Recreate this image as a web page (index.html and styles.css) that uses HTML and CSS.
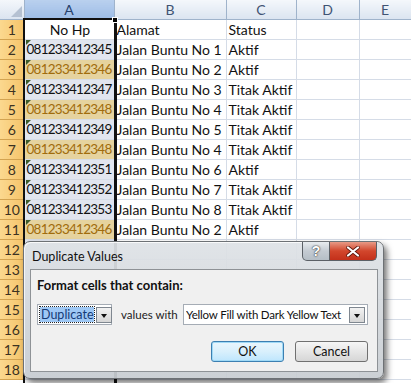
FILE: index.html
```html
<!DOCTYPE html>
<html lang="en">
<head>
    <meta charset="UTF-8">
    <title>Duplicate Values</title>
    <link rel="stylesheet" href="styles.css">
</head>
<body>
    <div class="sheet">
        <table class="grid">
            <colgroup>
                <col class="w-head">
                <col class="w-a">
                <col class="w-b">
                <col class="w-c">
                <col class="w-d">
                <col class="w-e">
            </colgroup>
            <thead>
                <tr>
                    <th class="corner"><span class="corner-tri"></span></th>
                    <th class="col-head selected">A</th>
                    <th class="col-head">B</th>
                    <th class="col-head">C</th>
                    <th class="col-head">D</th>
                    <th class="col-head">E</th>
                </tr>
            </thead>
            <tbody>
                <tr><th class="row-head">1</th><td class="a active center">No Hp</td><td>Alamat</td><td>Status</td><td></td><td></td></tr>
                <tr><th class="row-head">2</th><td class="a flag">081233412345</td><td>Jalan Buntu No 1</td><td>Aktif</td><td></td><td></td></tr>
                <tr><th class="row-head">3</th><td class="a flag dup">081233412346</td><td>Jalan Buntu No 2</td><td>Aktif</td><td></td><td></td></tr>
                <tr><th class="row-head">4</th><td class="a flag">081233412347</td><td>Jalan Buntu No 3</td><td>Titak Aktif</td><td></td><td></td></tr>
                <tr><th class="row-head">5</th><td class="a flag dup">081233412348</td><td>Jalan Buntu No 4</td><td>Titak Aktif</td><td></td><td></td></tr>
                <tr><th class="row-head">6</th><td class="a flag">081233412349</td><td>Jalan Buntu No 5</td><td>Titak Aktif</td><td></td><td></td></tr>
                <tr><th class="row-head">7</th><td class="a flag dup">081233412348</td><td>Jalan Buntu No 4</td><td>Titak Aktif</td><td></td><td></td></tr>
                <tr><th class="row-head">8</th><td class="a flag">081233412351</td><td>Jalan Buntu No 6</td><td>Aktif</td><td></td><td></td></tr>
                <tr><th class="row-head">9</th><td class="a flag">081233412352</td><td>Jalan Buntu No 7</td><td>Titak Aktif</td><td></td><td></td></tr>
                <tr><th class="row-head">10</th><td class="a flag">081233412353</td><td>Jalan Buntu No 8</td><td>Titak Aktif</td><td></td><td></td></tr>
                <tr><th class="row-head">11</th><td class="a flag dup">081233412346</td><td>Jalan Buntu No 2</td><td>Aktif</td><td></td><td></td></tr>
                <tr><th class="row-head">12</th><td class="a"></td><td></td><td></td><td></td><td></td></tr>
                <tr><th class="row-head">13</th><td class="a"></td><td></td><td></td><td></td><td></td></tr>
                <tr><th class="row-head">14</th><td class="a"></td><td></td><td></td><td></td><td></td></tr>
                <tr><th class="row-head">15</th><td class="a"></td><td></td><td></td><td></td><td></td></tr>
                <tr><th class="row-head">16</th><td class="a"></td><td></td><td></td><td></td><td></td></tr>
                <tr><th class="row-head">17</th><td class="a"></td><td></td><td></td><td></td><td></td></tr>
                <tr><th class="row-head">18</th><td class="a"></td><td></td><td></td><td></td><td></td></tr>
            </tbody>
        </table>

        <div class="selection"></div>
        <div class="fill-handle"></div>

        <div class="dialog">
            <div class="dialog-title">
                <span>Duplicate Values</span>
                <div class="title-buttons">
                    <button class="btn-help">?</button>
                    <button class="btn-close">
                        <svg width="14" height="11" viewBox="0 0 14 11">
                            <path d="M2 1.5 L12 9.5 M12 1.5 L2 9.5" stroke="#5a1208" stroke-width="3.6" stroke-linecap="round"/>
                            <path d="M2 1.5 L12 9.5 M12 1.5 L2 9.5" stroke="#fff" stroke-width="2.2" stroke-linecap="round"/>
                        </svg>
                    </button>
                </div>
            </div>
            <div class="dialog-body">
                <p class="dialog-label">Format cells that contain:</p>
                <div class="dialog-row">
                    <div class="combo combo-small">
                        <span class="combo-text focused">Duplicate</span>
                        <span class="combo-arrow"></span>
                    </div>
                    <span class="values-with">values with</span>
                    <div class="combo combo-wide">
                        <span class="combo-text">Yellow Fill with Dark Yellow Text</span>
                        <span class="combo-arrow"></span>
                    </div>
                </div>
                <div class="dialog-actions">
                    <button class="push default">OK</button>
                    <button class="push">Cancel</button>
                </div>
            </div>
        </div>
    </div>
</body>
</html>
```

FILE: styles.css
```css
:root {
    --grid-line: #d5dce7;
    --head-line: #9fb3cb;
    --row-line: #d3a350;
    --dup-fill: #e6d39e;
    --dup-text: #a06c0c;
    --sel-fill: #e1e5ef;
}

* {
    margin: 0;
    padding: 0;
    box-sizing: border-box;
}

body {
    background: #ffffff;
    font-family: Lato, "Liberation Sans", sans-serif;
    color: #111;
}

.sheet {
    position: relative;
    width: 411px;
    height: 383px;
    overflow: hidden;
}

.grid {
    border-collapse: collapse;
    table-layout: fixed;
    width: 411px;
    font-size: 14px;
}

.w-head { width: 24px; }
.w-a { width: 90px; }
.w-b { width: 112px; }
.w-c { width: 70px; }
.w-d { width: 63px; }
.w-e { width: 52px; }

.grid th,
.grid td {
    height: 20px;
    border: 1px solid var(--grid-line);
    white-space: nowrap;
    overflow: hidden;
    padding: 0 2px;
    line-height: 19px;
    vertical-align: bottom;
    text-align: left;
}

.grid thead th {
    height: 19px;
    border: 1px solid var(--head-line);
    border-top: none;
    background: linear-gradient(#f4f7fb, #dbe4f0);
    font-weight: normal;
    color: #3f5373;
    text-align: center;
    font-size: 14px;
    line-height: 17px;
    vertical-align: middle;
}

.grid thead th.selected {
    background: linear-gradient(#b9d0ee, #9dbce6);
    color: #26406a;
}

.grid thead th.corner {
    position: relative;
    border-left: none;
}

.corner-tri {
    position: absolute;
    right: 2px;
    bottom: 2px;
    width: 0;
    height: 0;
    border-left: 11px solid transparent;
    border-bottom: 11px solid #b5c1d2;
}

.grid .row-head {
    border: 1px solid var(--row-line);
    border-left: none;
    background: linear-gradient(90deg, #fbd88f, #f5c46a);
    color: #3c3222;
    text-align: center;
    font-weight: normal;
    font-size: 14px;
    padding: 0;
}

.grid td.a {
    background: var(--sel-fill);
    position: relative;
    font-size: 13.5px;
    letter-spacing: -0.75px;
    padding: 0 0 0 2px;
}

.grid td.active {
    background: #fff;
    letter-spacing: 0;
    font-size: 14px;
}

.grid td.center {
    text-align: center;
}

.grid td.dup {
    background: var(--dup-fill);
    color: var(--dup-text);
}

.grid td.flag::before {
    content: "";
    position: absolute;
    left: 1px;
    top: 0;
    border-top: 5px solid #3d5b2a;
    border-right: 5px solid transparent;
}

.selection {
    position: absolute;
    left: 23px;
    top: 18px;
    width: 94px;
    height: 400px;
    border-left: 2px solid #111;
    border-top: 2px solid #111;
    border-right: 3px solid #111;
    pointer-events: none;
}

.fill-handle {
    position: absolute;
    left: 112px;
    top: 17px;
    width: 6px;
    height: 6px;
    background: #000;
    border: 1px solid #fff;
}

/* dialog */

.dialog {
    position: absolute;
    left: 23px;
    top: 241px;
    width: 361px;
    height: 138px;
    border-radius: 7px;
    border: 1px solid #6d7175;
    background: linear-gradient(rgba(222, 226, 230, 0.93), rgba(200, 205, 210, 0.93));
    box-shadow: 3px 4px 6px rgba(0, 0, 0, 0.55), inset 1px 1px 0 rgba(255, 255, 255, 0.8);
    padding: 0 5px 6px 6px;
    display: flex;
    flex-direction: column;
    font-family: Lato, "Liberation Sans", sans-serif;
}

.dialog-title {
    height: 27px;
    flex: none;
    display: flex;
    align-items: flex-start;
    justify-content: space-between;
    font-size: 12.5px;
    color: #111;
}

.dialog-title span {
    padding: 7px 0 0 2px;
}

.title-buttons {
    display: flex;
    margin-right: 1px;
}

.title-buttons button {
    height: 19px;
    border: 1px solid #5b6066;
    border-top: none;
    font-family: "Liberation Sans", sans-serif;
    display: flex;
    align-items: center;
    justify-content: center;
}

.btn-help {
    width: 28px;
    border-radius: 0 0 0 5px;
    background: linear-gradient(#e8ecef, #c4cbd2 50%, #b5bec6);
    color: #fff;
    font-weight: bold;
    font-size: 14px;
    text-shadow: 0 0 2px #333, 0 0 1px #333;
}

.btn-close {
    width: 47px;
    border-left: none !important;
    border-radius: 0 0 5px 0;
    background: linear-gradient(#e89a86, #d2462c 50%, #c3301a);
}

.dialog-body {
    flex: 1;
    background: #f0f0f0;
    border: 1px solid #8e9296;
    padding: 7px 9px 0 6px;
    font-size: 11.5px;
}

.dialog-label {
    font-weight: bold;
    font-size: 13px;
    line-height: 16px;
    color: #111;
}

.dialog-row {
    display: flex;
    align-items: center;
    margin-top: 11px;
    white-space: nowrap;
}

.combo {
    height: 21px;
    flex: none;
    border: 1px solid #a5acb5;
    background: #fff;
    display: flex;
    align-items: center;
    padding: 0 2px;
}

.combo-small {
    width: 75px;
}

.combo-wide {
    width: 185px;
    margin-left: auto;
    letter-spacing: -0.2px;
}

.combo-text {
    flex: 1;
    white-space: nowrap;
    overflow: hidden;
}

.combo-text.focused {
    outline: 1px dotted #222;
    padding-left: 1px;
    margin-right: 2px;
    flex: none;
    width: 54px;
    background: #9ec8f5;
    color: #143a75;
    font-size: 12.5px;
}

.combo-arrow {
    width: 16px;
    height: 16px;
    flex: none;
    border: 1px solid #7f8790;
    background: linear-gradient(#f2f2f2, #d6d6d6);
    position: relative;
    margin-left: auto;
}

.combo-arrow::after {
    content: "";
    position: absolute;
    left: 4px;
    top: 6px;
    border-left: 3.5px solid transparent;
    border-right: 3.5px solid transparent;
    border-top: 4px solid #111;
}

.values-with {
    margin-left: 9px;
    color: #222;
}

.dialog-actions {
    display: flex;
    justify-content: flex-end;
    gap: 11px;
    margin-top: 16px;
}

.push {
    width: 73px;
    height: 21px;
    border: 1px solid #707070;
    border-radius: 3px;
    background: linear-gradient(#f6f6f6, #e6e6e6 50%, #d6d6d6);
    font-family: Lato, "Liberation Sans", sans-serif;
    font-size: 12.5px;
    color: #111;
}

.push.default {
    border-color: #3c7fb1;
    box-shadow: inset 0 0 0 1px #9fd9f6;
    background: linear-gradient(#eaf6fd, #d9f0fc 50%, #bee6fd);
}
```
